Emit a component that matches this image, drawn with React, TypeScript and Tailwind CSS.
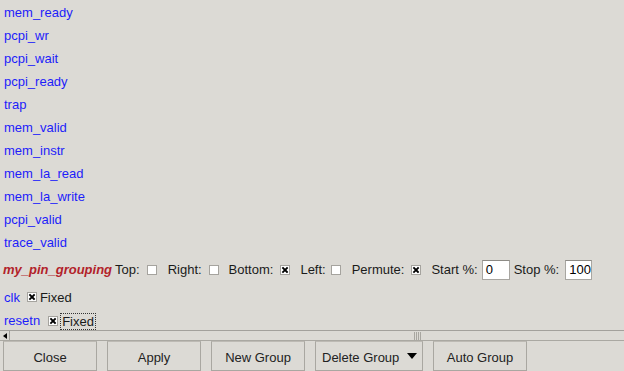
const pins = [
  "mem_ready",
  "pcpi_wr",
  "pcpi_wait",
  "pcpi_ready",
  "trap",
  "mem_valid",
  "mem_instr",
  "mem_la_read",
  "mem_la_write",
  "pcpi_valid",
  "trace_valid",
];

function Check({ on = false }: { on?: boolean }) {
  return (
    <svg width="10" height="10" viewBox="0 0 10 10" className="shrink-0">
      <rect x="0.5" y="0.5" width="9" height="9" fill="#ffffff" stroke="#a5a39e" />
      {on && (
        <path d="M3 3 L7 7 M7 3 L3 7" stroke="#000000" strokeWidth="1.8" strokeLinecap="square" />
      )}
    </svg>
  );
}

function Entry({ value, w }: { value: string; w: string }) {
  return (
    <div className={`${w} h-[20px] bg-white border border-[#a8a6a1] border-t-[#8d8b86] pl-[3px] flex items-center text-[13px] text-black`}>
      {value}
    </div>
  );
}

function Btn({ label, menu = false }: { label: string; menu?: boolean }) {
  return (
    <div
      className={`${menu ? "w-[108px] justify-between pl-[6px] pr-[5px]" : "w-[94px] justify-center"} h-[30px] shrink-0 flex items-start pt-[6px] border border-[#a9a7a1] border-t-[#bdbab4] bg-[#dcdad5] text-[13px] text-[#222]`}
    >
      <span>{label}</span>
      {menu && (
        <svg width="10" height="6" viewBox="0 0 10 6" className="mt-[5px]">
          <path d="M0 0 H10 L5 6 Z" fill="#000" />
        </svg>
      )}
    </div>
  );
}

export default function App() {
  return (
    <div
      className="w-[624px] h-[371px] overflow-hidden bg-[#dcdad5] flex flex-col text-[13px]"
      style={{ fontFamily: '"Liberation Sans", Arial, sans-serif' }}
    >
      {/* pin list */}
      <div className="flex flex-col pt-[1px]">
        {pins.map((p) => (
          <div key={p} className="h-[23px] flex items-center pl-[4px] text-[#1d1dfa]">
            {p}
          </div>
        ))}
      </div>

      {/* group row */}
      <div className="h-[33px] flex items-center pl-[3px] text-[#1a1a1a]">
        <span className="font-bold italic text-[#b2222a] mr-[3px]">my_pin_grouping</span>
        <span className="mr-[7px]">Top:</span>
        <Check />
        <span className="ml-[11px] mr-[7px]">Right:</span>
        <Check />
        <span className="ml-[10px] mr-[7px]">Bottom:</span>
        <Check on />
        <span className="ml-[10px] mr-[5px]">Left:</span>
        <Check />
        <span className="ml-[11px] mr-[7px]">Permute:</span>
        <Check on />
        <span className="ml-[10px] mr-[4px]">Start %:</span>
        <Entry value="0" w="w-[28px]" />
        <span className="ml-[4px] mr-[6px]">Stop %:</span>
        <Entry value="100" w="w-[27px]" />
      </div>

      {/* fixed pins */}
      <div className="h-[24px] flex items-center pl-[4px] text-[#1a1a1a]">
        <span className="text-[#1d1dfa] mr-[7px]">clk</span>
        <Check on />
        <span className="ml-[3px]">Fixed</span>
      </div>
      <div className="h-[21px] pt-[3px] flex items-center pl-[4px] text-[#1a1a1a]">
        <span className="text-[#1d1dfa] mr-[8px]">resetn</span>
        <Check on />
        <span className="ml-[2px] px-[1px] border border-dotted border-[#333] leading-[15px]">Fixed</span>
      </div>

      {/* horizontal scrollbar */}
      <div className="h-[11px] shrink-0 flex border-t border-[#a3a19c] border-b border-b-[#aaa8a2] bg-[#dcdad5]">
        <div className="w-[10px] flex items-center justify-center border-r border-[#a3a19c]">
          <svg width="4" height="6" viewBox="0 0 4 6">
            <path d="M4 0 V6 L0 3 Z" fill="#000" />
          </svg>
        </div>
        <div className="flex-1 flex items-center pl-[404px]">
          <div className="flex gap-[1px]">
            <div className="w-[1px] h-[8px] bg-[#a8a6a0]" />
            <div className="w-[1px] h-[8px] bg-[#a8a6a0]" />
            <div className="w-[1px] h-[8px] bg-[#a8a6a0]" />
            <div className="w-[1px] h-[8px] bg-[#a8a6a0]" />
          </div>
        </div>
      </div>

      {/* buttons */}
      <div className="flex gap-[10px] pl-[3px]">
        <Btn label="Close" />
        <Btn label="Apply" />
        <Btn label="New Group" />
        <Btn label="Delete Group" menu />
        <Btn label="Auto Group" />
      </div>
    </div>
  );
}
